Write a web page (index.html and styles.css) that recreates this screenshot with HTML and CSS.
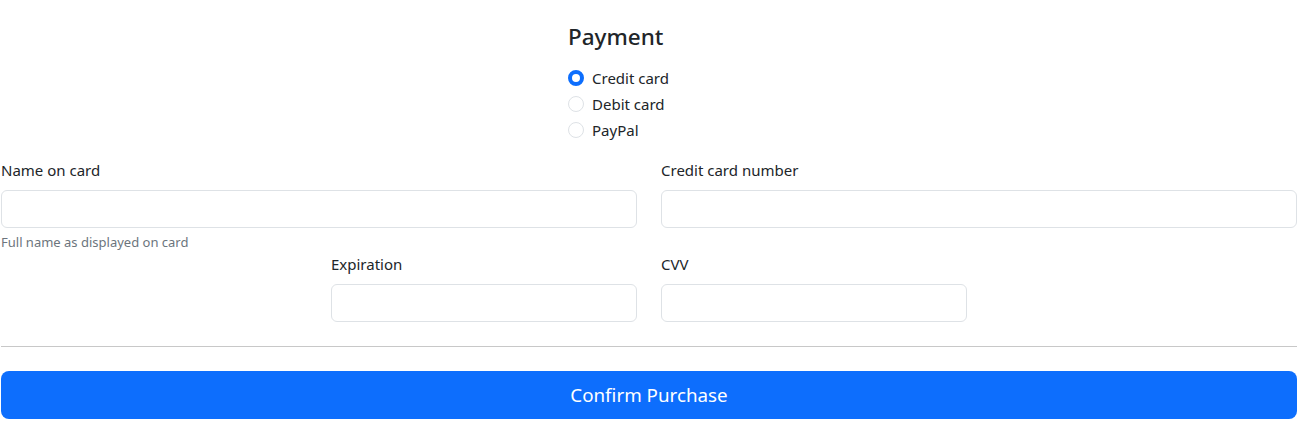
FILE: index.html
```html
<!DOCTYPE html>
<html lang="en">
<head>
<meta charset="utf-8">
<title>Payment</title>
<link rel="stylesheet" href="styles.css">
</head>
<body>
<main class="page">
  <section class="payment">
    <h4 class="title">Payment</h4>
    <div class="methods">
      <label class="check"><span class="radio checked"></span>Credit card</label>
      <label class="check"><span class="radio"></span>Debit card</label>
      <label class="check"><span class="radio"></span>PayPal</label>
    </div>
  </section>
  <div class="fields">
    <div class="field span2">
      <label class="label">Name on card</label>
      <div class="input"></div>
      <small class="help">Full name as displayed on card</small>
    </div>
    <div class="field span2">
      <label class="label">Credit card number</label>
      <div class="input"></div>
    </div>
    <div class="field col2">
      <label class="label">Expiration</label>
      <div class="input"></div>
    </div>
    <div class="field col3">
      <label class="label">CVV</label>
      <div class="input"></div>
    </div>
  </div>
  <hr class="divider">
  <button class="btn">Confirm Purchase</button>
</main>
</body>
</html>
```
FILE: styles.css
```css
* { box-sizing: border-box; }
html, body { margin: 0; background: #fff; }
body {
  font-family: "Noto Sans", "Open Sans", sans-serif;
  font-size: 15px;
  line-height: 24px;
  color: #212529;
}
.page { padding: 0 2px 0 1px; }
.payment { padding-left: 567px; padding-top: 23px; }
.title {
  margin: 0;
  font-size: 22.5px;
  font-weight: 500;
  line-height: 28px;
}
.methods { margin-top: 15px; margin-bottom: 16px; display: flex; flex-direction: column; gap: 2px; }
.check { display: flex; align-items: center; gap: 8px; height: 24px; }
.radio {
  width: 16px; height: 16px; border-radius: 50%;
  border: 1px solid #dee2e6; background: #fff; flex: none;
}
.radio.checked { border: 4px solid #0d6efd; }
.fields {
  display: grid;
  grid-template-columns: repeat(4, 1fr);
  column-gap: 24px;
}
.field { display: flex; flex-direction: column; }
.span2 { grid-column: span 2; }
.col2 { grid-column: 2; }
.col3 { grid-column: 3; }
.label { display: block; margin-bottom: 8px; }
.input {
  height: 38px;
  border: 1px solid #dee2e6;
  border-radius: 6px;
  background: #fff;
}
.help { margin-top: 4px; font-size: 13px; line-height: 20px; color: #6c757d; }
.divider { margin: 24px 0; border: 0; border-top: 1px solid #c8c8c8; }
.btn {
  display: block; width: 100%; height: 48px;
  background: #0d6efd; color: #fff;
  border: 0; border-radius: 8px;
  font-family: inherit; font-size: 18.8px;
}
```
